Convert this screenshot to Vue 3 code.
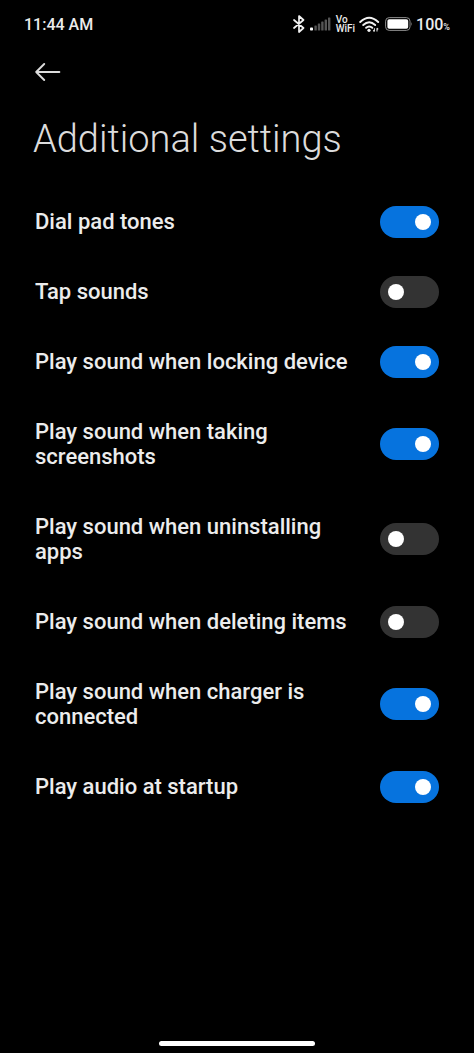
<script setup>
import { ref } from 'vue'

const settings = ref([
  { id: 'dial-pad', label: 'Dial pad tones', on: true },
  { id: 'tap', label: 'Tap sounds', on: false },
  { id: 'lock', label: 'Play sound when locking device', on: true },
  { id: 'screenshot', label: 'Play sound when taking screenshots', on: true },
  { id: 'uninstall', label: 'Play sound when uninstalling apps', on: false },
  { id: 'delete', label: 'Play sound when deleting items', on: false },
  { id: 'charger', label: 'Play sound when charger is connected', on: true },
  { id: 'startup', label: 'Play audio at startup', on: true },
])
</script>

<template>
  <div class="screen">
    <div class="status">
      <span class="time">11:44 AM</span>
      <div class="indicators">
        <svg class="bluetooth" width="12" height="18" viewBox="0 0 12 18" aria-hidden="true">
          <path d="M1 5 L10.5 13 L6 17 V1 L10.5 5 L1 13" fill="none" stroke="#f2f2f2" stroke-width="1.7" stroke-linejoin="round" stroke-linecap="round" />
        </svg>
        <svg class="signal" width="21" height="14" viewBox="0 0 21 14" aria-hidden="true">
          <rect x="0" y="10.5" width="3" height="3" rx="0.8" fill="#fff" />
          <g fill="#555">
            <rect x="4.4" y="8.5" width="2.4" height="5" rx="0.6" />
            <rect x="7.8" y="6.5" width="2.4" height="7" rx="0.6" />
            <rect x="11.2" y="4.5" width="2.4" height="9" rx="0.6" />
            <rect x="14.6" y="2.5" width="2.4" height="11" rx="0.6" />
            <rect x="18" y="0.5" width="2.4" height="13" rx="0.6" />
          </g>
        </svg>
        <span class="vowifi">Vo<br />WiFi</span>
        <svg class="wifi" width="21" height="17" viewBox="0 0 21 17" aria-hidden="true">
          <g fill="none" stroke="#f2f2f2" stroke-width="1.9" stroke-linecap="round">
            <path d="M1.2 6 Q10.2 -2.6 19.2 6" />
            <path d="M4.2 9 Q10.2 3.3 16.2 9" />
            <path d="M7.1 11.8 Q10.2 9 13.3 11.8" />
          </g>
          <circle cx="10" cy="14.3" r="1.6" fill="#f2f2f2" />
          <path d="M15.4 12.2 V15.4 M14.2 14.4 L15.4 15.7 M18 15.6 V12.2 M18 12 L19.2 13.3" fill="none" stroke="#ddd" stroke-width="1.1" />
        </svg>
        <svg class="battery" width="28" height="14" viewBox="0 0 28 14" aria-hidden="true">
          <rect x="0.6" y="0.6" width="24.4" height="12.8" rx="3.6" fill="none" stroke="#8c8c8c" stroke-width="1" />
          <rect x="2.4" y="2.2" width="20.8" height="9.6" rx="1.8" fill="#fff" />
          <path d="M26.2 5 Q27.6 7 26.2 9 Z" fill="#8c8c8c" />
        </svg>
        <span class="level">100<span class="percent">%</span></span>
      </div>
    </div>

    <header class="header">
      <button class="back" type="button" aria-label="Back">
        <svg width="26" height="18" viewBox="0 0 26 18" aria-hidden="true">
          <path d="M24.4 9 H1.2 M9.2 1 L1.2 9 L9.2 17" fill="none" stroke="#dcdcdc" stroke-width="1.9" stroke-linecap="round" stroke-linejoin="round" />
        </svg>
      </button>
      <h1>Additional settings</h1>
    </header>

    <main class="list">
      <label v-for="item in settings" :key="item.id" class="row" :for="item.id">
        <span class="label">{{ item.label }}</span>
        <input :id="item.id" v-model="item.on" class="toggle" type="checkbox" role="switch" />
      </label>
    </main>

    <div class="home-bar"></div>
  </div>
</template>

<style>
body {
  background: #000;
}
</style>

<style scoped>
.screen {
  box-sizing: border-box;
  min-height: 100vh;
  display: flex;
  flex-direction: column;
  background: #000;
  color: #ececec;
  font-family: Roboto, "Liberation Sans", sans-serif;
}

.status {
  display: flex;
  align-items: center;
  justify-content: space-between;
  height: 48px;
  padding: 0 24px;
}

.time,
.level {
  padding-top: 2px;
  font-size: 16px;
  font-weight: 500;
  line-height: 20px;
}

.indicators {
  display: flex;
  align-items: center;
}

.signal {
  margin-left: 5px;
}

.vowifi {
  margin-left: 5px;
  font-size: 10px;
  font-weight: 500;
  line-height: 9px;
}

.wifi {
  margin-left: 4px;
}

.battery {
  margin-left: 5px;
}

.level {
  margin-left: 3px;
}

.percent {
  font-size: 9px;
  line-height: 9px;
}

.header {
  padding: 12px 33px 0;
}

.back {
  display: flex;
  align-items: center;
  height: 24px;
  margin: 0;
  padding: 0 2px;
  border: 0;
  background: none;
  cursor: pointer;
}

h1 {
  margin: 30px 0 0;
  font-size: 38px;
  font-weight: 300;
  line-height: 50px;
  color: #dcdcdc;
}

.list {
  flex: 1;
  padding: 22px 35px;
}

.row {
  display: flex;
  align-items: center;
  justify-content: space-between;
  gap: 29px;
  min-height: 25px;
  padding: 23px 0 22px;
  cursor: pointer;
}

.label {
  font-size: 22px;
  font-weight: 500;
  line-height: 25px;
}

.toggle {
  flex: none;
  appearance: none;
  box-sizing: border-box;
  width: 59px;
  height: 32px;
  margin: -4px 0;
  padding: 8px;
  border-radius: 16px;
  background: #333;
  cursor: pointer;
}

.toggle::before {
  content: "";
  display: block;
  width: 16px;
  height: 16px;
  border-radius: 50%;
  background: #fff;
}

.toggle:checked {
  background: #0673de;
}

.toggle:checked::before {
  margin-left: auto;
}

.home-bar {
  align-self: center;
  width: 33%;
  height: 5px;
  margin-bottom: 7px;
  border-radius: 3px;
  background: #fff;
}
</style>
